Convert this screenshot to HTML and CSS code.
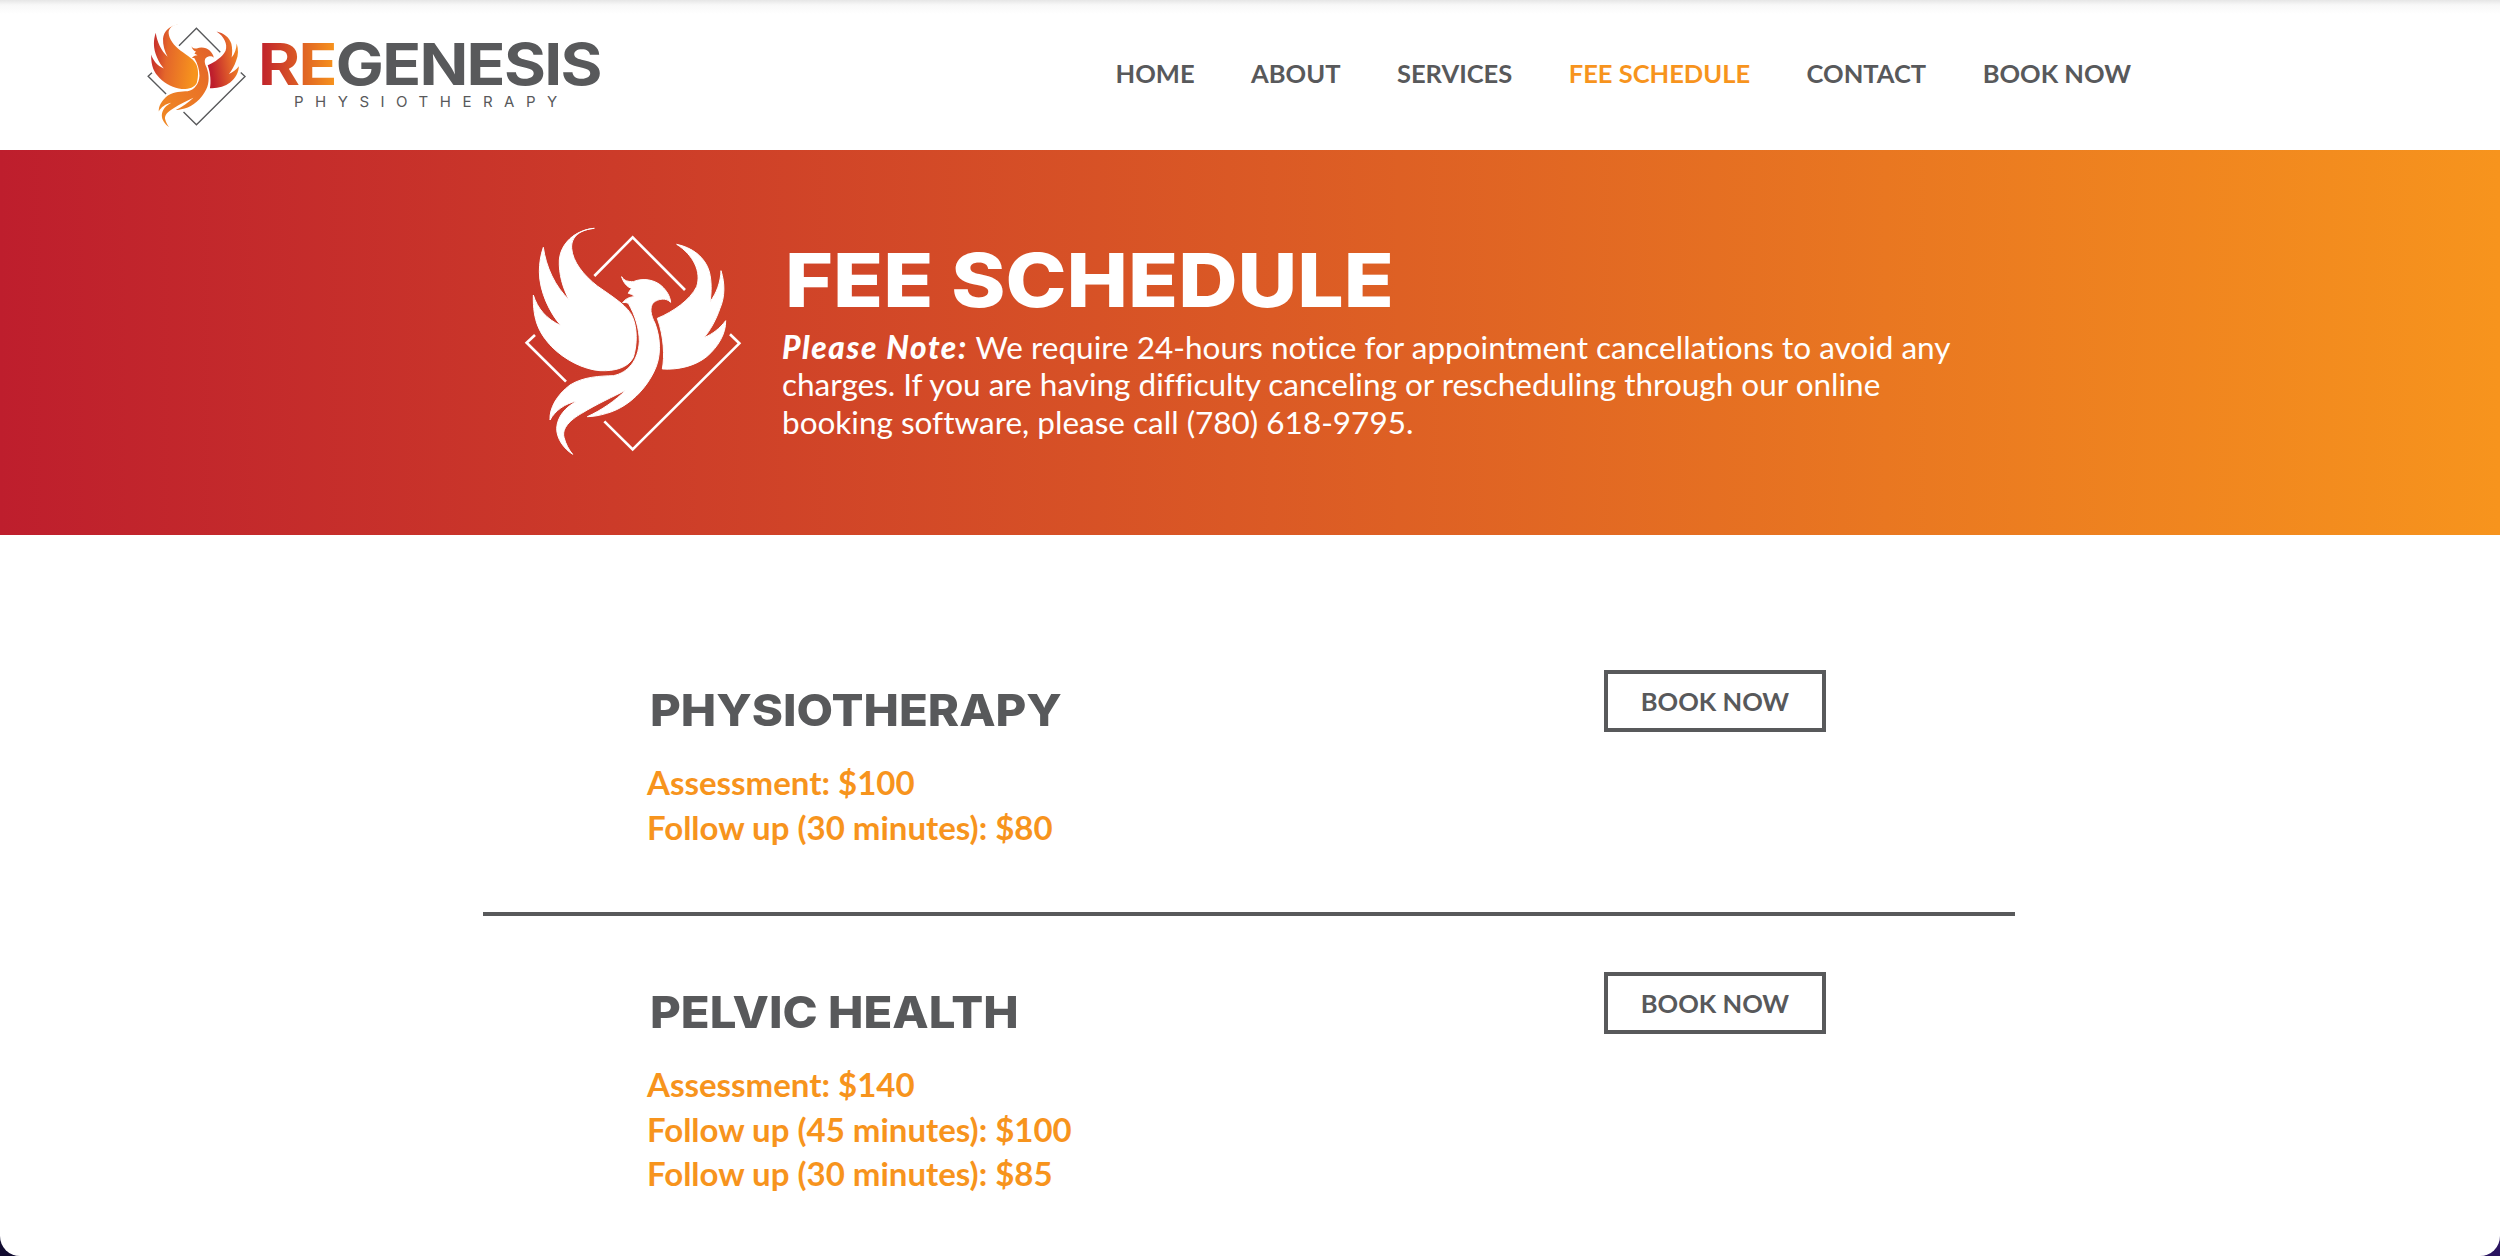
FILE: index.html
```html
<!DOCTYPE html>
<html lang="en">
<head>
    <meta charset="UTF-8">
    <title>Fee Schedule - Regenesis Physiotherapy</title>
    <link rel="stylesheet" href="styles.css">
</head>
<body>
    <div class="page">
        <header class="header">
            <a class="logo" href="#">
                <svg class="logo-mark" viewBox="0 0 810 840">
                    <defs>
                        <linearGradient id="wing-left-grad" x1="0" y1="0" x2="1" y2="0.15">
                            <stop offset="0" stop-color="#be1e2d"/>
                            <stop offset="0.4" stop-color="#e4662a"/>
                            <stop offset="1" stop-color="#f7941d"/>
                        </linearGradient>
                        <linearGradient id="wing-right-grad" x1="0" y1="0.3" x2="1" y2="0">
                            <stop offset="0" stop-color="#be1e2d"/>
                            <stop offset="0.6" stop-color="#e4662a"/>
                            <stop offset="1" stop-color="#f7941d"/>
                        </linearGradient>
                        <linearGradient id="body-grad" x1="0" y1="1" x2="1" y2="0">
                            <stop offset="0" stop-color="#f08a24"/>
                            <stop offset="0.6" stop-color="#ea7426"/>
                            <stop offset="1" stop-color="#e0602a"/>
                        </linearGradient>
                        <path id="wing-left" d="M283 85C245 88 212 108 215 145C218 185 250 225 292 258C345 295 385 320 398 352C412 385 412 432 400 472C385 503 345 514 300 512C250 508 195 480 155 440C120 402 98 365 100 285C112 325 140 358 183 377C150 340 118 275 118 215C118 190 122 165 130 142C138 200 165 260 208 300C188 265 176 220 178 180C182 130 225 90 283 85Z"/>
                        <path id="wing-right" d="M530 133C575 142 615 170 628 215C635 245 635 275 630 305C650 280 662 245 663 212C675 250 675 290 660 325C648 360 630 392 612 413C638 402 660 385 677 362C678 400 655 440 620 470C585 498 535 510 487 507C494 470 492 410 472 355C520 335 570 300 590 260C605 215 580 165 530 133Z"/>
                        <path id="phoenix-body" d="M365 230C372 243 385 245 400 245C430 232 465 240 485 258C500 272 510 288 512 307C498 292 475 296 460 308C448 322 452 345 465 370C482 415 485 470 462 515C430 580 375 625 320 640C300 646 280 650 262 650C305 630 345 603 378 570C340 590 290 612 245 640C210 660 185 685 192 712C197 732 207 750 218 763C190 745 170 715 170 685C172 650 195 622 232 603C195 610 165 632 150 660C148 625 170 585 210 555C250 530 300 528 340 527C385 518 415 480 418 425C418 385 405 345 385 310C378 307 373 307 368 308C375 298 388 290 405 290C398 284 390 281 385 280C388 273 392 268 395 265C382 262 370 248 365 230Z"/>
                    </defs>
                    <path class="logo-frame" d="M283 228L398 112L555 270M105 405L80 428L198 545M690 403L718 430L398 748L313 664"/>
                    <use href="#wing-left" class="logo-wing-left"/>
                    <use href="#wing-right" class="logo-wing-right"/>
                    <use href="#phoenix-body" class="logo-body"/>
                </svg>
                <span class="logo-text">
                    <span class="logo-name"><span class="logo-re">RE</span>GENESIS</span>
                    <span class="logo-sub">PHYSIOTHERAPY</span>
                </span>
            </a>
            <nav class="nav">
                <a href="#">HOME</a>
                <a href="#">ABOUT</a>
                <a href="#">SERVICES</a>
                <a href="#" class="active">FEE SCHEDULE</a>
                <a href="#">CONTACT</a>
                <a href="#">BOOK NOW</a>
            </nav>
        </header>

        <section class="banner">
            <svg class="banner-mark" viewBox="0 0 810 840">
                <path class="banner-frame" d="M283 228L398 112L555 270M105 405L80 428L198 545M690 403L718 430L398 748L313 664"/>
                <use href="#wing-left"/>
                <use href="#wing-right"/>
                <use href="#phoenix-body"/>
            </svg>
            <div class="banner-text">
                <h1>FEE SCHEDULE</h1>
                <p><strong>Please Note:</strong> We require 24-hours notice for appointment cancellations to avoid any charges. If you are having difficulty canceling or rescheduling through our online booking software, please call (780) 618-9795.</p>
            </div>
        </section>

        <main class="fees">
            <section class="fee-row">
                <div class="fee-info">
                    <h2>PHYSIOTHERAPY</h2>
                    <ul>
                        <li>Assessment: $100</li>
                        <li>Follow up (30 minutes): $80</li>
                    </ul>
                </div>
                <a class="book-btn" href="#">BOOK NOW</a>
            </section>
            <section class="fee-row">
                <div class="fee-info">
                    <h2>PELVIC HEALTH</h2>
                    <ul>
                        <li>Assessment: $140</li>
                        <li>Follow up (45 minutes): $100</li>
                        <li>Follow up (30 minutes): $85</li>
                    </ul>
                </div>
                <a class="book-btn" href="#">BOOK NOW</a>
            </section>
        </main>
    </div>
</body>
</html>
```

FILE: styles.css
```css
html, body {
    height: 100%;
    margin: 0;
}

body {
    background: linear-gradient(90deg, #120c30, #2a1460);
    font-family: 'Lato', 'Liberation Sans', sans-serif;
    font-variant-ligatures: no-common-ligatures;
    overflow: hidden;
}

a {
    text-decoration: none;
    color: inherit;
}

.page {
    height: 1256px;
    background-color: #fff;
    border-radius: 0 0 20px 20px;
    overflow: hidden;
}

/* header */
.header {
    display: flex;
    align-items: flex-start;
    height: 150px;
    background: linear-gradient(#e6e6e6, #f8f8f8 5px, #fff 14px);
}

.logo {
    display: flex;
    margin: 11px 0 0 136px;
}

.logo-mark {
    width: 123px;
    height: 128px;
}

.logo-frame {
    fill: none;
    stroke: #58595b;
    stroke-width: 9;
}

.logo-wing-left {
    fill: url(#wing-left-grad);
}

.logo-wing-right {
    fill: url(#wing-right-grad);
}

.logo-body {
    fill: url(#body-grad);
}

.logo-text {
    display: flex;
    flex-direction: column;
    align-items: flex-start;
    margin: 28px 0 0 -1px;
}

.logo-name {
    font-family: 'Inter', sans-serif;
    font-size: 58px;
    font-weight: 700;
    line-height: 50px;
    letter-spacing: -1.5px;
    color: #58595b;
    transform: scaleX(1.105);
    transform-origin: left;
}

.logo-re {
    background: linear-gradient(90deg, #be1e2d, #f7941d);
    -webkit-background-clip: text;
    background-clip: text;
    color: transparent;
}

.logo-sub {
    margin: 4px 0 0 36px;
    font-family: 'Inter', sans-serif;
    font-size: 15px;
    line-height: 17px;
    letter-spacing: 11.5px;
    color: #58595b;
}

.nav {
    display: flex;
    gap: 56.5px;
    margin: 57px 369px 0 auto;
    font-size: 25.5px;
    font-weight: 700;
    line-height: 32px;
    color: #58595b;
}

.nav .active {
    color: #f7941d;
}

/* banner */
.banner {
    display: flex;
    gap: 12px;
    height: 385px;
    padding: 50px 0 0 500px;
    box-sizing: border-box;
    background: linear-gradient(90deg, #be1e2d, #f7941d);
    color: #fff;
}

.banner-mark {
    flex: none;
    width: 270px;
    height: 280px;
    fill: #fff;
    stroke: #fff;
    stroke-width: 3;
}

.banner-frame {
    fill: none;
    stroke-width: 8;
}

.banner-text {
    width: 1190px;
}

.banner-text h1 {
    margin: 36px 0 0 3px;
    font-family: 'Inter', sans-serif;
    font-size: 74px;
    font-weight: 800;
    line-height: 88px;
    transform: scaleX(1.11);
    transform-origin: left;
}

.banner-text p {
    margin: 5px 0 0;
    font-size: 31.5px;
    line-height: 37.3px;
}

.banner-text strong {
    font-style: italic;
    font-weight: 900;
    letter-spacing: 1.6px;
}

/* fee rows */
.fees {
    width: 1532px;
    margin-left: 483px;
}

.fee-row {
    display: flex;
    align-items: flex-start;
    height: 377px;
    padding: 135px 0 0 164px;
    box-sizing: border-box;
}

.fee-row + .fee-row {
    height: auto;
    padding-top: 56px;
    border-top: 4px solid #58595b;
}

.fee-info {
    width: 957px;
}

.fee-info h2 {
    margin: 14px 0 0 3px;
    font-family: 'Inter', sans-serif;
    font-size: 44px;
    font-weight: 800;
    line-height: 52px;
    color: #58595b;
    transform: scaleX(1.075);
    transform-origin: left;
}

.fee-info ul {
    margin: 24px 0 0;
    padding: 0;
    list-style: none;
    font-size: 33px;
    font-weight: 700;
    line-height: 44.5px;
    color: #f7941d;
}

.book-btn {
    display: flex;
    align-items: center;
    justify-content: center;
    box-sizing: border-box;
    width: 222px;
    height: 62px;
    border: 4px solid #58595b;
    font-size: 25.5px;
    font-weight: 700;
    color: #58595b;
}
```
